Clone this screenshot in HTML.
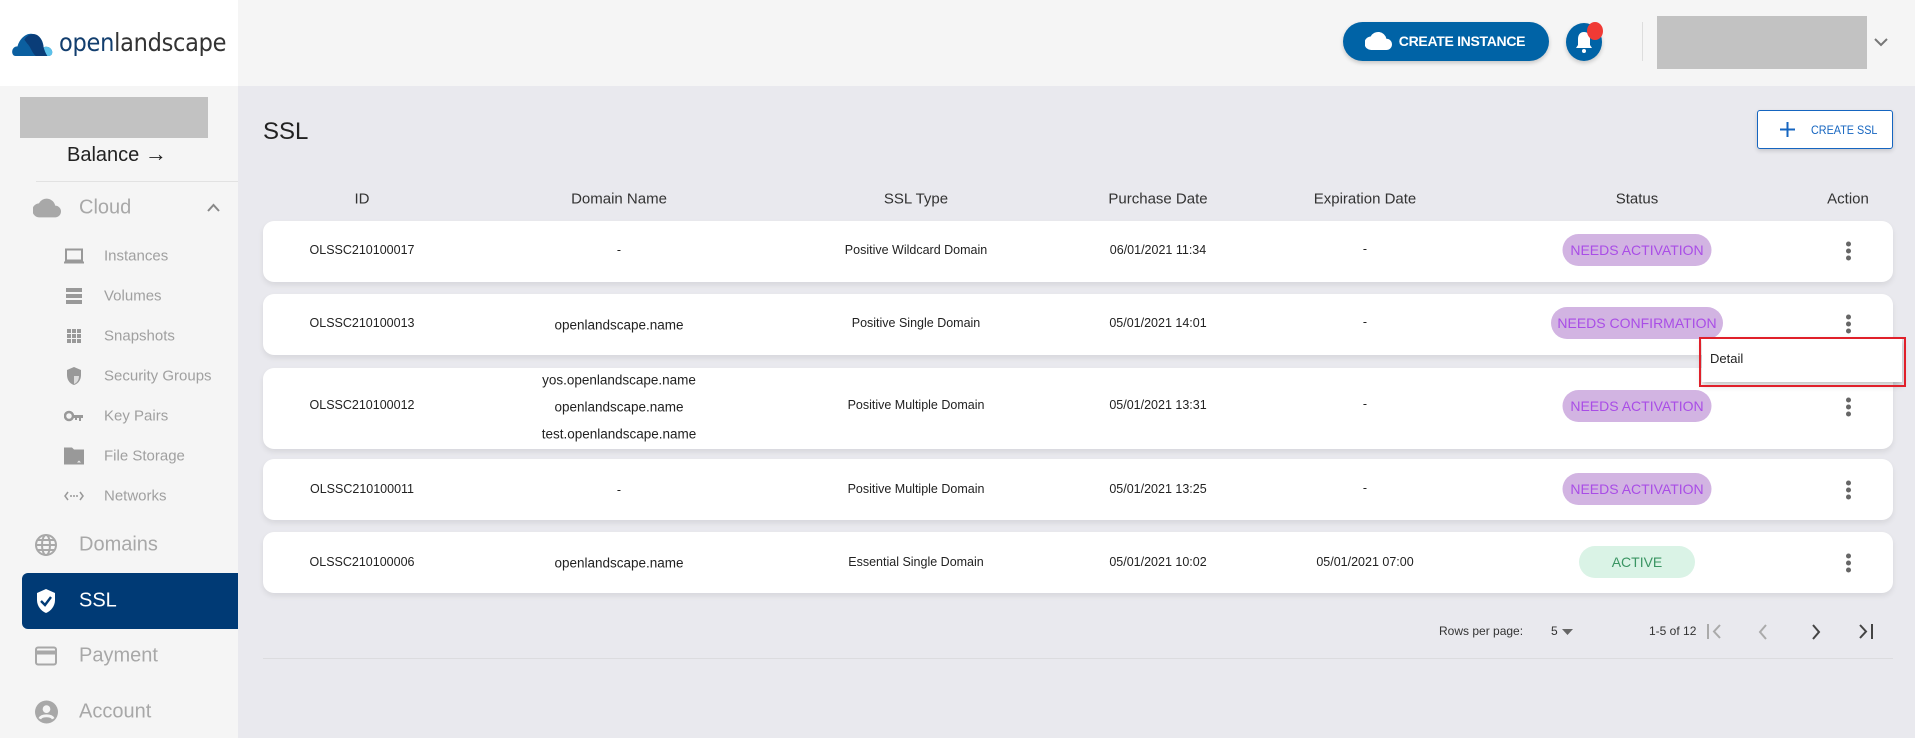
<!DOCTYPE html>
<html><head><meta charset="utf-8"><style>
*{box-sizing:border-box;margin:0;padding:0}
body{width:1915px;height:738px;overflow:hidden;background:#e9e9ee;font-family:"Liberation Sans",sans-serif;position:relative;color:#222}
.abs{position:absolute}
#top{left:0;top:0;width:1915px;height:86px;background:#f5f5f5}
#side{left:0;top:0;width:238px;height:738px;background:#f5f5f5}
#logo{left:0;top:0;width:238px;height:86px;background:#fff}
.sub{position:absolute;left:104px;font-size:15px;color:#a0a0a0;transform:translateY(-50%)}
.subi{position:absolute;left:64px;width:20px;transform:translateY(-50%)}
.main{position:absolute;left:79px;font-size:20px;color:#a8a8a8;transform:translateY(-50%)}
.mi{position:absolute;left:33px;transform:translateY(-50%)}
.th{position:absolute;top:199px;font-size:15px;color:#333;transform:translate(-50%,-50%);white-space:nowrap}
.card{position:absolute;left:263px;width:1630px;background:#fff;border-radius:11px;box-shadow:0 3px 6px rgba(0,0,0,.08)}
.c{position:absolute;font-size:12.5px;color:#222;transform:translate(-50%,-50%);white-space:nowrap}
.badge{position:absolute;height:32px;border-radius:16px;font-size:14px;line-height:32px;text-align:center;transform:translate(-50%,-50%);white-space:nowrap}
.na{background:#d2b4e2;color:#a94de6}
.ac{background:#daf3e6;color:#3a9563}
.keb{position:absolute;left:1846px;width:5px;transform:translateY(-50%)}
.keb i{display:block;width:5px;height:5px;border-radius:50%;background:#666;margin:2px 0}
.pg{position:absolute;top:631px;font-size:12px;color:#333;transform:translateY(-50%);white-space:nowrap}
</style></head><body>
<div id="top" class="abs"></div>
<div id="side" class="abs"></div>
<div id="logo" class="abs">
<svg class="abs" style="left:10px;top:30px" width="44" height="27" viewBox="0 0 44 28">
<path d="M5 27 C0 27 0 17 7 17 C9 9 16 3 22 4 C30 4 34 12 34 18 C38 16 43 19 43 23 C43 27 40 27 38 27 Z" fill="#0b5fa0"/>
<path d="M14 10 C18 3 27 2 31 9 C34 14 34 22 38 27 L26 27 C22 24 21 18 17 14 Z" fill="#0a3d78"/>
<path d="M34 18 C38 16 43 19 43 23 C43 27 40 27 38 27 C36 24 35 21 34 18Z" fill="#5bc1ea"/>
</svg>
<div class="abs" style="left:59px;top:28px;font-size:25px;line-height:29px;letter-spacing:-0.3px;font-family:'DejaVu Sans','Liberation Sans',sans-serif;transform:scaleX(0.9);transform-origin:left;white-space:nowrap"><span style="color:#123e6e">open</span><span style="color:#333">landscape</span></div>
</div>
<div class="abs" style="left:20px;top:97px;width:188px;height:41px;background:#c2c2c2"></div>
<div class="abs" style="left:67px;top:141px;font-size:20px;color:#222">Balance <span style="font-size:22px">→</span></div>
<div class="abs" style="left:36px;top:181px;width:202px;height:1px;background:#e2e2e2"></div>

<svg class="mi" style="top:208px" width="28" height="20" viewBox="0 0 24 16"><path d="M19 6A7.5 7.5 0 0 0 5 4 6 6 0 0 0 6 16h13a5 5 0 0 0 0-10z" fill="#a8a8a8"/></svg>
<div class="main" style="top:208px">Cloud</div>
<svg class="abs" style="left:207px;top:203px" width="13" height="9" viewBox="0 0 13 9"><path d="M1 8 6.5 2 12 8" stroke="#888" stroke-width="2" fill="none"/></svg>

<svg class="subi" style="top:256px" width="20" height="15" viewBox="0 0 20 15"><rect x="2" y="1" width="16" height="11" fill="none" stroke="#999" stroke-width="2"/><rect x="0" y="13" width="20" height="2" fill="#999"/></svg>
<div class="sub" style="top:256px">Instances</div>
<svg class="subi" style="top:296px" width="20" height="16" viewBox="0 0 20 16"><rect x="2" y="0" width="16" height="4" fill="#999"/><rect x="2" y="6" width="16" height="4" fill="#999"/><rect x="2" y="12" width="16" height="4" fill="#999"/></svg>
<div class="sub" style="top:296px">Volumes</div>
<svg class="subi" style="top:336px" width="20" height="14" viewBox="0 0 20 14"><g fill="#999"><rect x="3" y="0" width="4" height="4"/><rect x="8" y="0" width="4" height="4"/><rect x="13" y="0" width="4" height="4"/><rect x="3" y="5" width="4" height="4"/><rect x="8" y="5" width="4" height="4"/><rect x="13" y="5" width="4" height="4"/><rect x="3" y="10" width="4" height="4"/><rect x="8" y="10" width="4" height="4"/><rect x="13" y="10" width="4" height="4"/></g></svg>
<div class="sub" style="top:336px">Snapshots</div>
<svg class="subi" style="top:376px" width="20" height="20" viewBox="0 0 20 20"><path d="M10 1 3 4v5c0 5 3 9 7 10 4-1 7-5 7-10V4z" fill="#999"/><path d="M10 3v7h5c0 4-2 7-5 8z" fill="#ddd"/></svg>
<div class="sub" style="top:376px">Security Groups</div>
<svg class="subi" style="top:416px" width="20" height="12" viewBox="0 0 20 12"><circle cx="5" cy="6" r="4" fill="none" stroke="#999" stroke-width="2.5"/><path d="M9 5h10v3h-2v3h-2V8h-2v2h-2V8H9z" fill="#999"/></svg>
<div class="sub" style="top:416px">Key Pairs</div>
<svg class="subi" style="top:456px" width="20" height="17" viewBox="0 0 20 17"><path d="M0 0h8l2 2h10v15H0z" fill="#999"/><path d="M15 13l2 2h-4z" fill="#eee"/></svg>
<div class="sub" style="top:456px">File Storage</div>
<svg class="subi" style="top:496px" width="20" height="12" viewBox="0 0 20 12"><path d="M4 2 1 6l3 4M16 2l3 4-3 4" stroke="#999" stroke-width="1.5" fill="none"/><circle cx="7" cy="6" r="1" fill="#999"/><circle cx="10" cy="6" r="1" fill="#999"/><circle cx="13" cy="6" r="1" fill="#999"/></svg>
<div class="sub" style="top:496px">Networks</div>

<svg class="mi" style="top:545px;left:35px" width="22" height="22" viewBox="0 0 22 22"><g fill="none" stroke="#a8a8a8" stroke-width="2"><circle cx="11" cy="11" r="10"/><ellipse cx="11" cy="11" rx="4" ry="10"/><path d="M1 11h20M3 6h16M3 16h16"/></g></svg>
<div class="main" style="top:545px">Domains</div>

<div class="abs" style="left:22px;top:573px;width:216px;height:56px;background:#003a75;border-radius:6px 0 0 6px"></div>
<svg class="mi" style="top:601px;left:36px" width="20" height="24" viewBox="0 0 20 24"><path d="M10 0 1 4v7c0 6 4 11 9 13 5-2 9-7 9-13V4z" fill="#fff"/><path d="M5 12l4 4 6-8" stroke="#003a75" stroke-width="2.4" fill="none"/></svg>
<div class="main" style="top:601px;color:#fff">SSL</div>

<svg class="mi" style="top:656px;left:35px" width="22" height="19" viewBox="0 0 22 19"><rect x="1" y="1" width="20" height="17" rx="2" fill="none" stroke="#a8a8a8" stroke-width="2"/><rect x="1" y="4" width="20" height="4" fill="#a8a8a8"/></svg>
<div class="main" style="top:656px">Payment</div>
<svg class="mi" style="top:712px;left:35px" width="23" height="23" viewBox="0 0 24 24"><circle cx="12" cy="12" r="12" fill="#a8a8a8"/><circle cx="12" cy="9" r="4" fill="#f5f5f5"/><path d="M5 19c2-4 12-4 14 0" stroke="#f5f5f5" stroke-width="3" fill="none"/></svg>
<div class="main" style="top:712px">Account</div>

<!-- top bar right -->
<div class="abs" style="left:1343px;top:22px;width:206px;height:39px;border-radius:20px;background:#0063a6;box-shadow:0 2px 4px rgba(0,0,0,.2)"></div>
<svg class="abs" style="left:1365px;top:31px" width="27" height="20" viewBox="0 0 24 16"><path d="M19 6A7.5 7.5 0 0 0 5 4 6 6 0 0 0 6 16h13a5 5 0 0 0 0-10z" fill="#fff"/></svg>
<div class="abs" style="left:1382px;top:33px;width:160px;text-align:center;color:#fff;font-size:14px;font-weight:bold;letter-spacing:-0.3px">CREATE INSTANCE</div>
<div class="abs" style="left:1566px;top:23px;width:36px;height:38px;border-radius:50%;background:#0063a6;box-shadow:0 2px 4px rgba(0,0,0,.2)"></div>
<svg class="abs" style="left:1575px;top:30px" width="18" height="24" viewBox="0 0 18 24"><path d="M9 2C5 2 3 5 3 9v6l-2 3h16l-2-3V9c0-4-2-7-6-7z" fill="#fff"/><circle cx="9" cy="21" r="2" fill="#fff"/></svg>
<div class="abs" style="left:1587px;top:22px;width:16px;height:18px;border-radius:50%;background:#f03a35"></div>
<div class="abs" style="left:1642px;top:22px;width:1px;height:39px;background:#ddd"></div>
<div class="abs" style="left:1657px;top:16px;width:210px;height:53px;background:#c2c2c2"></div>
<svg class="abs" style="left:1874px;top:38px" width="14" height="9" viewBox="0 0 14 9"><path d="M1 1l6 6 6-6" stroke="#777" stroke-width="2" fill="none"/></svg>

<div class="abs" style="left:263px;top:118px;font-size:24px;color:#222">SSL</div>
<div class="abs" style="left:1757px;top:110px;width:136px;height:39px;border:1px solid #1565c0;border-radius:3px;background:#fff;box-shadow:0 2px 4px rgba(0,0,0,.15)"></div>
<svg class="abs" style="left:1780px;top:122px" width="15" height="15" viewBox="0 0 15 15"><path d="M7.5 0v15M0 7.5h15" stroke="#1565c0" stroke-width="2"/></svg>
<div class="abs" style="left:1811px;top:123px;font-size:12px;color:#1565c0;transform:scaleX(0.9);transform-origin:left;white-space:nowrap">CREATE SSL</div>

<div class="th" style="left:362px">ID</div>
<div class="th" style="left:619px">Domain Name</div>
<div class="th" style="left:916px">SSL Type</div>
<div class="th" style="left:1158px">Purchase Date</div>
<div class="th" style="left:1365px">Expiration Date</div>
<div class="th" style="left:1637px">Status</div>
<div class="th" style="left:1848px">Action</div>

<div class="card" style="top:221px;height:61px"></div>
<div class="card" style="top:294px;height:61px"></div>
<div class="card" style="top:368px;height:81px"></div>
<div class="card" style="top:459px;height:61px"></div>
<div class="card" style="top:532px;height:61px"></div>

<div class="c" style="left:362px;top:250px">OLSSC210100017</div>
<div class="c" style="left:619px;top:250px">-</div>
<div class="c" style="left:916px;top:250px">Positive Wildcard Domain</div>
<div class="c" style="left:1158px;top:250px">06/01/2021 11:34</div>
<div class="c" style="left:1365px;top:249px">-</div>
<div class="badge na" style="left:1637px;top:250px;width:149px">NEEDS ACTIVATION</div>
<div class="keb" style="top:251px"><i></i><i></i><i></i></div>

<div class="c" style="left:362px;top:323px">OLSSC210100013</div>
<div class="c" style="left:619px;top:325px;font-size:13.5px">openlandscape.name</div>
<div class="c" style="left:916px;top:323px">Positive Single Domain</div>
<div class="c" style="left:1158px;top:323px">05/01/2021 14:01</div>
<div class="c" style="left:1365px;top:322px">-</div>
<div class="badge na" style="left:1637px;top:323px;width:172px">NEEDS CONFIRMATION</div>
<div class="keb" style="top:324px"><i></i><i></i><i></i></div>

<div class="c" style="left:362px;top:405px">OLSSC210100012</div>
<div class="c" style="left:619px;top:380px;font-size:13.5px">yos.openlandscape.name</div>
<div class="c" style="left:619px;top:407px;font-size:13.5px">openlandscape.name</div>
<div class="c" style="left:619px;top:434px;font-size:13.5px">test.openlandscape.name</div>
<div class="c" style="left:916px;top:405px">Positive Multiple Domain</div>
<div class="c" style="left:1158px;top:405px">05/01/2021 13:31</div>
<div class="c" style="left:1365px;top:404px">-</div>
<div class="badge na" style="left:1637px;top:406px;width:149px">NEEDS ACTIVATION</div>
<div class="keb" style="top:407px"><i></i><i></i><i></i></div>

<div class="c" style="left:362px;top:489px">OLSSC210100011</div>
<div class="c" style="left:619px;top:490px">-</div>
<div class="c" style="left:916px;top:489px">Positive Multiple Domain</div>
<div class="c" style="left:1158px;top:489px">05/01/2021 13:25</div>
<div class="c" style="left:1365px;top:488px">-</div>
<div class="badge na" style="left:1637px;top:489px;width:149px">NEEDS ACTIVATION</div>
<div class="keb" style="top:490px"><i></i><i></i><i></i></div>

<div class="c" style="left:362px;top:562px">OLSSC210100006</div>
<div class="c" style="left:619px;top:563px;font-size:13.5px">openlandscape.name</div>
<div class="c" style="left:916px;top:562px">Essential Single Domain</div>
<div class="c" style="left:1158px;top:562px">05/01/2021 10:02</div>
<div class="c" style="left:1365px;top:562px">05/01/2021 07:00</div>
<div class="badge ac" style="left:1637px;top:562px;width:116px">ACTIVE</div>
<div class="keb" style="top:563px"><i></i><i></i><i></i></div>

<div class="abs" style="left:1702px;top:338px;width:200px;height:44px;background:#fff;box-shadow:0 3px 6px rgba(0,0,0,.25)"></div>
<div class="abs" style="left:1699px;top:337px;width:207px;height:50px;border:2px solid #e0202a"></div>
<div class="abs" style="left:1710px;top:351px;font-size:13px;color:#222">Detail</div>

<div class="pg" style="left:1439px">Rows per page:</div>
<div class="pg" style="left:1551px">5</div>
<svg class="abs" style="left:1562px;top:629px" width="11" height="6" viewBox="0 0 11 6"><path d="M0 0h11L5.5 6z" fill="#666"/></svg>
<div class="pg" style="left:1649px">1-5 of 12</div>
<svg class="abs" style="left:1706px;top:623px" width="16" height="17" viewBox="0 0 16 17"><path d="M2 1v15M14 2 8 8.5l6 6.5" stroke="#aaa" stroke-width="2" fill="none"/></svg>
<svg class="abs" style="left:1758px;top:624px" width="10" height="16" viewBox="0 0 10 16"><path d="M8 1 2 8l6 7" stroke="#aaa" stroke-width="2" fill="none"/></svg>
<svg class="abs" style="left:1811px;top:624px" width="10" height="16" viewBox="0 0 10 16"><path d="M2 1l6 7-6 7" stroke="#444" stroke-width="2" fill="none"/></svg>
<svg class="abs" style="left:1858px;top:623px" width="16" height="17" viewBox="0 0 16 17"><path d="M2 2l6 6.5L2 15M14 1v15" stroke="#444" stroke-width="2" fill="none"/></svg>
<div class="abs" style="left:263px;top:658px;width:1630px;height:1px;background:#dcdcdf"></div>
</body></html>
